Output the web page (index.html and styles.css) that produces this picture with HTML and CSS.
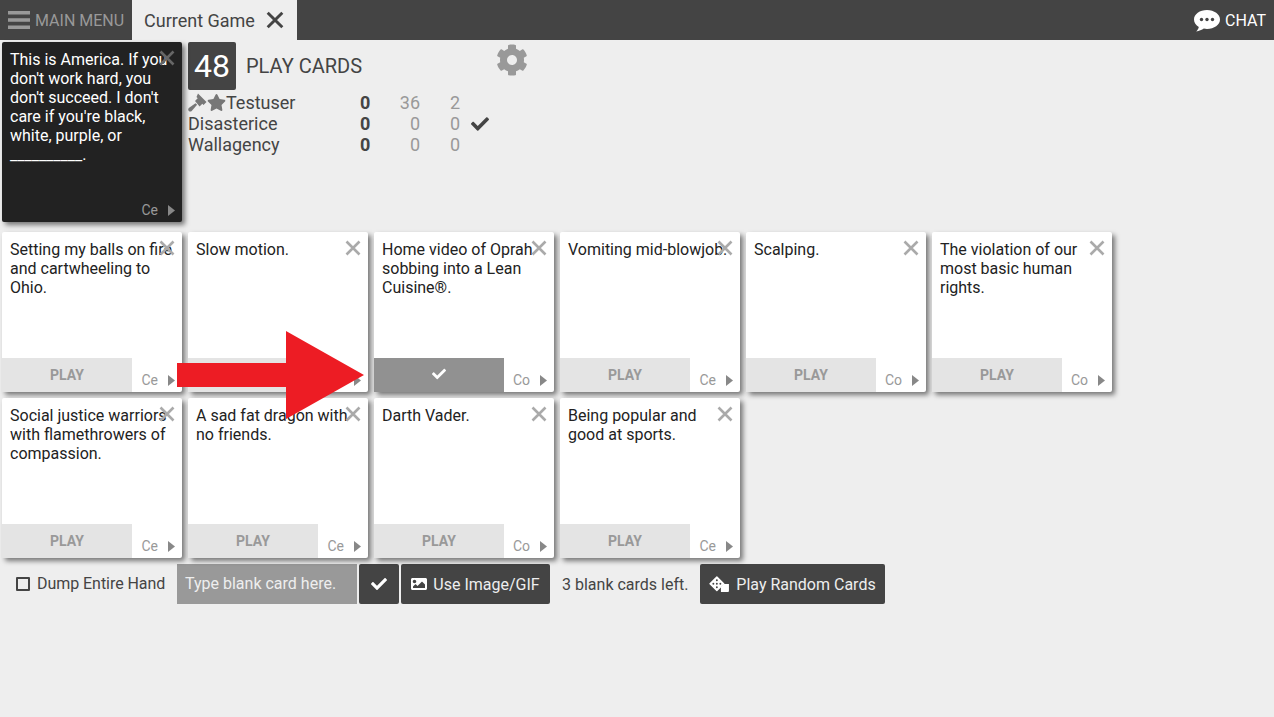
FILE: index.html
```html
<!DOCTYPE html>
<html lang="en">
<head>
    <meta charset="UTF-8">
    <meta name="viewport" content="width=device-width, initial-scale=1.0">
    <title>Current Game</title>
    <link rel="stylesheet" href="styles.css">
</head>
<body>

    <svg class="icon-sprites" width="0" height="0">
        <symbol id="i-x" viewBox="0 0 16 16"><path d="M1.5 1.5l13 13M14.5 1.5l-13 13" fill="none" stroke="currentColor" stroke-width="2.6"/></symbol>
        <symbol id="i-check" viewBox="0 0 512 512"><path fill="currentColor" d="M173.898 439.404l-166.4-166.4c-9.997-9.997-9.997-26.206 0-36.204l36.203-36.204c9.997-9.998 26.207-9.998 36.204 0L192 312.69 432.095 72.596c9.997-9.997 26.207-9.997 36.204 0l36.203 36.204c9.997 9.997 9.997 26.206 0 36.204l-294.4 294.401c-9.998 9.997-26.207 9.997-36.204-.001z"/></symbol>
        <symbol id="i-caret" viewBox="0 0 7 11"><path fill="currentColor" d="M0 0L7 5.500L0 11z"/></symbol>
    </svg>

    <header class="topbar">
        <div class="menu-tab">
            <svg class="menu-icon" viewBox="0 0 22 18"><path fill="currentColor" d="M0 0h22v3.4H0zM0 7.3h22v3.4H0zM0 14.6h22V18H0z"/></svg>
            <span>MAIN MENU</span>
        </div>
        <div class="game-tab">
            <span>Current Game</span>
            <svg class="tab-close"><use href="#i-x"/></svg>
        </div>
        <div class="chat">
            <svg class="chat-icon" viewBox="0 0 26 22"><path fill="currentColor" d="M13 0C5.800 0 0 4.200 0 9.500c0 3 1.900 5.600 4.800 7.400C4.500 18.500 3.600 20 2.200 21.400c2.800-.2 5.800-1.500 7.600-2.800 1 .2 2.100.3 3.200.3 7.200 0 13-4.200 13-9.400S20.200 0 13 0z"/><circle cx="7.500" cy="9.500" r="1.700" fill="#444"/><circle cx="13" cy="9.500" r="1.700" fill="#444"/><circle cx="18.500" cy="9.500" r="1.700" fill="#444"/></svg>
            <span>CHAT</span>
        </div>
    </header>

    <main class="game">
        <section class="top-row">
            <div class="card card-black">
                <p class="card-text">This is America. If you don't work hard, you don't succeed. I don't care if you're black, white, purple, or __________.</p>
                <svg class="card-close"><use href="#i-x"/></svg>
                <div class="card-foot">
                    <div class="card-set">Ce<svg class="caret"><use href="#i-caret"/></svg></div>
                </div>
            </div>

            <div class="status">
                <div class="status-head">
                    <div class="timer">48</div>
                    <div class="phase">PLAY CARDS</div>
                    <svg class="gear" viewBox="0 0 512 512"><path fill="currentColor" d="M487.4 315.7l-42.6-24.6c4.3-23.2 4.3-47 0-70.2l42.6-24.6c4.9-2.8 7.1-8.6 5.500-14-11.100-35.600-30-67.800-54.700-94.600-3.800-4.100-10-5.100-14.800-2.300L380.800 110c-17.900-15.400-38.500-27.300-60.800-35.100V25.800c0-5.600-3.900-10.500-9.400-11.700-36.700-8.200-74.300-7.800-109.200 0-5.500 1.200-9.400 6.100-9.400 11.700V75c-22.200 7.900-42.800 19.800-60.800 35.100L88.700 85.500c-4.900-2.800-11-1.900-14.800 2.300-24.700 26.700-43.600 58.900-54.700 94.600-1.700 5.400.6 11.200 5.500 14L67.300 221c-4.300 23.200-4.300 47 0 70.200l-42.600 24.600c-4.900 2.800-7.100 8.600-5.500 14 11.100 35.600 30 67.800 54.700 94.600 3.800 4.100 10 5.100 14.800 2.300l42.600-24.600c17.900 15.400 38.500 27.300 60.800 35.100v49.200c0 5.600 3.900 10.500 9.400 11.700 36.700 8.200 74.300 7.800 109.200 0 5.500-1.200 9.400-6.100 9.400-11.700v-49.200c22.200-7.900 42.800-19.800 60.800-35.100l42.600 24.600c4.900 2.800 11 1.900 14.800-2.300 24.700-26.700 43.600-58.900 54.700-94.600 1.500-5.500-.7-11.300-5.600-14.100zM256 336c-44.100 0-80-35.900-80-80s35.900-80 80-80 80 35.900 80 80-35.900 80-80 80z"/></svg>
                </div>
                <div class="scores">
                    <div class="score-name">
                        <svg class="gavel" viewBox="0 0 19 19"><path fill="currentColor" d="M10 0.500l8.500 8.500-3 3-1.200-1.200-2.700 2.700L7 8l2.700-2.700L8.500 4z"/><path fill="currentColor" d="M7.500 10.200l1.600 1.600-5.400 6.200c-.8.800-2.100.8-2.900 0s-.8-2.100 0-2.900z"/></svg><svg class="star" viewBox="0 0 576 512"><path fill="currentColor" d="M259.300 17.800L194 150.200 47.900 171.500c-26.200 3.800-36.700 36.100-17.700 54.600l105.700 103-25 145.500c-4.500 26.300 23.200 46 46.400 33.700L288 439.600l130.700 68.700c23.200 12.200 50.900-7.400 46.400-33.700l-25-145.500 105.700-103c19-18.500 8.500-50.800-17.700-54.600L382 150.200 316.700 17.800c-11.700-23.600-45.600-23.900-57.400 0z"/></svg>Testuser
                    </div>
                    <div class="score-pts">0</div><div class="score-num">36</div><div class="score-num">2</div><div></div>
                    <div class="score-name">Disasterice</div>
                    <div class="score-pts">0</div><div class="score-num">0</div><div class="score-num">0</div>
                    <svg class="score-check"><use href="#i-check"/></svg>
                    <div class="score-name">Wallagency</div>
                    <div class="score-pts">0</div><div class="score-num">0</div><div class="score-num">0</div><div></div>
                </div>
            </div>
        </section>

        <section class="hand">
            <div class="card">
                <p class="card-text">Setting my balls on fire and cartwheeling to Ohio.</p>
                <svg class="card-close"><use href="#i-x"/></svg>
                <div class="card-foot"><button class="play-btn">PLAY</button><div class="card-set">Ce<svg class="caret"><use href="#i-caret"/></svg></div></div>
            </div>
            <div class="card">
                <p class="card-text">Slow motion.</p>
                <svg class="card-close"><use href="#i-x"/></svg>
                <div class="card-foot"><button class="play-btn">PLAY</button><div class="card-set">Ce<svg class="caret"><use href="#i-caret"/></svg></div></div>
            </div>
            <div class="card">
                <p class="card-text">Home video of Oprah sobbing into a Lean Cuisine®.</p>
                <svg class="card-close"><use href="#i-x"/></svg>
                <div class="card-foot"><button class="play-btn played"><svg class="played-check"><use href="#i-check"/></svg></button><div class="card-set">Co<svg class="caret"><use href="#i-caret"/></svg></div></div>
            </div>
            <div class="card">
                <p class="card-text">Vomiting mid-blowjob.</p>
                <svg class="card-close"><use href="#i-x"/></svg>
                <div class="card-foot"><button class="play-btn">PLAY</button><div class="card-set">Ce<svg class="caret"><use href="#i-caret"/></svg></div></div>
            </div>
            <div class="card">
                <p class="card-text">Scalping.</p>
                <svg class="card-close"><use href="#i-x"/></svg>
                <div class="card-foot"><button class="play-btn">PLAY</button><div class="card-set">Co<svg class="caret"><use href="#i-caret"/></svg></div></div>
            </div>
            <div class="card">
                <p class="card-text">The violation of our most basic human rights.</p>
                <svg class="card-close"><use href="#i-x"/></svg>
                <div class="card-foot"><button class="play-btn">PLAY</button><div class="card-set">Co<svg class="caret"><use href="#i-caret"/></svg></div></div>
            </div>
            <div class="card">
                <p class="card-text">Social justice warriors with flamethrowers of compassion.</p>
                <svg class="card-close"><use href="#i-x"/></svg>
                <div class="card-foot"><button class="play-btn">PLAY</button><div class="card-set">Ce<svg class="caret"><use href="#i-caret"/></svg></div></div>
            </div>
            <div class="card">
                <p class="card-text">A sad fat dragon with no friends.</p>
                <svg class="card-close"><use href="#i-x"/></svg>
                <div class="card-foot"><button class="play-btn">PLAY</button><div class="card-set">Ce<svg class="caret"><use href="#i-caret"/></svg></div></div>
            </div>
            <div class="card">
                <p class="card-text">Darth Vader.</p>
                <svg class="card-close"><use href="#i-x"/></svg>
                <div class="card-foot"><button class="play-btn">PLAY</button><div class="card-set">Co<svg class="caret"><use href="#i-caret"/></svg></div></div>
            </div>
            <div class="card">
                <p class="card-text">Being popular and good at sports.</p>
                <svg class="card-close"><use href="#i-x"/></svg>
                <div class="card-foot"><button class="play-btn">PLAY</button><div class="card-set">Ce<svg class="caret"><use href="#i-caret"/></svg></div></div>
            </div>
        </section>

        <section class="actions">
            <label class="dump"><span class="checkbox"></span>Dump Entire Hand</label>
            <div class="blank-input">Type blank card here.</div>
            <button class="dark-btn check-btn"><svg class="btn-check"><use href="#i-check"/></svg></button>
            <button class="dark-btn image-btn">
                <svg class="btn-icon" viewBox="0 0 512 512"><path fill="currentColor" d="M464 448H48c-26.510 0-48-21.490-48-48V112c0-26.510 21.490-48 48-48h416c26.510 0 48 21.490 48 48v288c0 26.510-21.490 48-48 48zM112 120c-30.928 0-56 25.072-56 56s25.072 56 56 56 56-25.072 56-56-25.072-56-56-56zM64 384h384V272l-87.515-87.515c-4.686-4.686-12.284-4.686-16.971 0L208 320l-55.515-55.515c-4.686-4.686-12.284-4.686-16.971 0L64 336v48z"/></svg>
                Use Image/GIF
            </button>
            <span class="blank-count">3 blank cards left.</span>
            <button class="dark-btn random-btn">
                <svg class="dice" viewBox="0 0 22 18">
                    <path fill="#fff" d="M8.200 1l7.200 7.200-7.200 7.200L1 8.200z" stroke="#fff" stroke-width="1.500" stroke-linejoin="round"/>
                    <path fill="#fff" d="M15.500 8.500H21v7.500a1 1 0 0 1-1 1h-7.500v-5.300z"/>
                    <g fill="#444"><circle cx="8.200" cy="4.500" r="1"/><circle cx="4.500" cy="8.200" r="1"/><circle cx="8.200" cy="8.200" r="1"/><circle cx="11.900" cy="8.200" r="1"/><circle cx="8.200" cy="11.900" r="1"/></g>
                </svg>
                Play Random Cards
            </button>
        </section>
    </main>

    <svg class="arrow" viewBox="0 0 187 88"><path fill="#ed1c24" d="M0 32h109V0l78 44-78 44V56H0z"/></svg>

</body>
</html>
```

FILE: styles.css
```css
body {
    margin: 0;
    padding: 0;
    font-family: 'Roboto', sans-serif;
    background-color: #eee;
    color: #444;
    height: 717px;
    overflow: hidden;
    position: relative;
}

.icon-sprites {
    position: absolute;
}

/* top bar */
.topbar {
    display: flex;
    height: 40px;
    background-color: #444;
}

.menu-tab {
    display: flex;
    align-items: center;
    width: 132px;
    padding-left: 8px;
    box-sizing: border-box;
    gap: 5px;
    font-size: 16px;
    color: #999;
}

.menu-icon {
    width: 22px;
    height: 18px;
}

.game-tab {
    display: flex;
    align-items: center;
    width: 165px;
    padding-left: 12px;
    box-sizing: border-box;
    background-color: #eee;
    font-size: 18px;
    color: #444;
}

.tab-close {
    width: 18px;
    height: 18px;
    margin-left: 11px;
}

.chat {
    margin-left: auto;
    display: flex;
    align-items: center;
    gap: 5px;
    padding-right: 8px;
    font-size: 16px;
    color: #fff;
}

.chat-icon {
    width: 26px;
    height: 22px;
    margin-top: 1px;
}

/* game area */
.game {
    padding: 2px 0 0 2px;
}

.top-row {
    display: flex;
    gap: 6px;
    height: 190px;
}

.status-head {
    display: flex;
    align-items: flex-start;
}

.timer {
    width: 48px;
    height: 48px;
    line-height: 48px;
    text-align: center;
    background-color: #444;
    border-radius: 2px;
    color: #fff;
    font-size: 32px;
}

.phase {
    margin-left: 10px;
    line-height: 48px;
    font-size: 20px;
}

.gear {
    width: 32px;
    height: 32px;
    margin: 2px 0 0 134px;
    color: #999;
}

.scores {
    display: grid;
    grid-template-columns: 172px 10px 50px 40px 30px;
    grid-auto-rows: 21px;
    margin-top: 2px;
    font-size: 18px;
    line-height: 21px;
}

.score-name {
    white-space: nowrap;
    display: flex;
    align-items: center;
}

.gavel {
    width: 19px;
    height: 19px;
    color: #777;
}

.star {
    width: 19px;
    height: 17px;
    color: #777;
}

.score-pts {
    font-weight: bold;
    text-align: right;
}

.score-num {
    color: #999;
    text-align: right;
}

.score-check {
    width: 18px;
    height: 18px;
    margin: 2px 0 0 11px;
}

/* cards */
.hand {
    display: grid;
    grid-template-columns: repeat(6, 180px);
    grid-auto-rows: 160px;
    gap: 6px;
}

.card {
    position: relative;
    display: flex;
    flex-direction: column;
    box-sizing: border-box;
    background-color: #fff;
    color: #222;
    border-radius: 2px;
    box-shadow: 3px 3px 5px rgba(0, 0, 0, 0.5);
    font-size: 16px;
    line-height: 19px;
}

.card-black {
    width: 180px;
    height: 180px;
    background-color: #222;
    color: #fff;
}

.card-text {
    flex: 1;
    margin: 0;
    padding: 8px;
}

.card-close {
    position: absolute;
    top: 8px;
    right: 7px;
    width: 16px;
    height: 16px;
    color: #aaa;
}

.card-black .card-close {
    color: #666;
}

.card-foot {
    display: flex;
    height: 34px;
}

.play-btn {
    width: 130px;
    height: 34px;
    padding: 0;
    border: none;
    background-color: #e4e4e4;
    color: #999;
    font-family: inherit;
    font-size: 14px;
    font-weight: bold;
}

.play-btn.played {
    background-color: #919191;
    color: #fff;
}

.played-check {
    width: 14px;
    height: 14px;
    vertical-align: middle;
    margin-bottom: 3px;
}

.card-set {
    flex: 1;
    display: flex;
    align-items: center;
    justify-content: flex-end;
    gap: 10px;
    padding: 10px 7px 0 0;
    font-size: 14px;
    color: #999;
}

.caret {
    width: 7px;
    height: 11px;
    color: #888;
}

/* bottom actions */
.actions {
    display: flex;
    align-items: center;
    height: 40px;
    margin-top: 6px;
    font-size: 16px;
}

.dump {
    display: flex;
    align-items: center;
    width: 175px;
    padding-left: 14px;
    box-sizing: border-box;
    gap: 7px;
    letter-spacing: -0.05px;
    padding-bottom: 2px;
}

.checkbox {
    width: 10px;
    height: 10px;
    border: 2px solid #444;
    border-radius: 1px;
    margin-top: 1px;
}

.blank-input {
    width: 180px;
    height: 40px;
    line-height: 39px;
    padding-left: 8px;
    box-sizing: border-box;
    background-color: #999;
    color: #eee;
}

.dark-btn {
    display: flex;
    align-items: center;
    justify-content: center;
    height: 40px;
    padding: 0;
    border: none;
    border-radius: 2px;
    background-color: #444;
    color: #eee;
    font-family: inherit;
    font-size: 16px;
}

.check-btn {
    width: 40px;
    margin-left: 2px;
}

.btn-check {
    width: 16px;
    height: 16px;
    color: #fff;
}

.image-btn {
    width: 149px;
    margin-left: 2px;
    gap: 6px;
}

.btn-icon {
    width: 16px;
    height: 16px;
    color: #fff;
}

.blank-count {
    margin-left: 12px;
    width: 138px;
}

.random-btn {
    width: 185px;
    gap: 6px;
}

.dice {
    width: 21px;
    height: 17px;
}

/* red annotation over the cards */
.arrow {
    position: absolute;
    left: 177px;
    top: 331px;
    width: 187px;
    height: 88px;
}
```
